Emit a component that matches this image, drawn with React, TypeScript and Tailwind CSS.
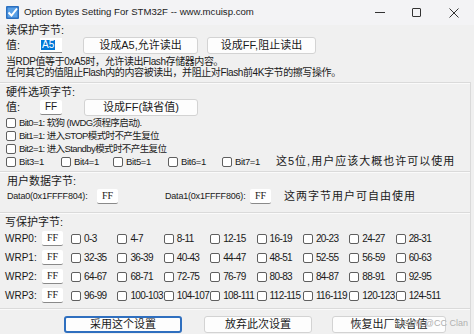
import React from "react";

const cjk = { fontFamily: '"Liberation Sans", "Noto Sans CJK SC", sans-serif' };
const mono = { fontFamily: '"Liberation Serif", serif' };

function Box() {
  return <span className="inline-block w-[10px] h-[10px] shrink-0 rounded-[2px] border border-[#5f5f5f] bg-white" />;
}

function Check({ label, className = "" }: { label: string; className?: string }) {
  return (
    <div className={"flex items-center gap-[3px] whitespace-nowrap " + className}>
      <Box />
      <span className="leading-none">{label}</span>
    </div>
  );
}

function Field({ value, w = "w-[21px]", serif = false }: { value: string; w?: string; serif?: boolean }) {
  return (
    <div
      className={`${w} h-[15px] shrink-0 bg-white border-b border-[#8a8a8a] rounded-[2px] flex items-center pl-[5px] text-[10px] leading-none`}
      style={serif ? mono : undefined}
    >
      {value}
    </div>
  );
}

function Btn({ label, w, focus = false }: { label: string; w: string; focus?: boolean }) {
  return (
    <div
      className={`${w} h-[17px] flex items-center justify-center rounded-[3px] bg-[#fdfdfd] text-[11px] leading-none ${
        focus ? "border-2 border-[#2f6fbf]" : "border border-[#d3d3d3]"
      }`}
    >
      {label}
    </div>
  );
}

function Section({ children, className = "" }: { children: React.ReactNode; className?: string }) {
  return (
    <div className={"border-t border-r border-[#dadada] shadow-[inset_0_1px_0_#fafafa] mr-[3px] " + className}>
      {children}
    </div>
  );
}

const wrp = [
  ["0-3", "4-7", "8-11", "12-15", "16-19", "20-23", "24-27", "28-31"],
  ["32-35", "36-39", "40-43", "44-47", "48-51", "52-55", "56-59", "60-63"],
  ["64-67", "68-71", "72-75", "76-79", "80-83", "84-87", "88-91", "92-95"],
  ["96-99", "100-103", "104-107", "108-111", "112-115", "116-119", "120-123", "124-511"],
];

export default function App() {
  return (
    <div className="w-[474px] h-[334px] overflow-hidden bg-[#f0f0f0] text-[11px] text-[#1a1a1a] relative" style={cjk}>
      {/* title bar */}
      <div className="h-[25px] bg-[#f3f3f5] flex items-center">
        <svg className="ml-[6px]" width="13" height="13" viewBox="0 0 13 13">
          <rect x="0" y="0" width="13" height="13" rx="1" fill="#2a6fc0" />
          <rect x="1.5" y="1.5" width="10" height="10" fill="#5aa0e6" />
          <path d="M2.5 6.5 L5.5 9.5 L11 2.5" stroke="#fff" strokeWidth="2" fill="none" />
        </svg>
        <span className="ml-[5px] text-[9.6px] text-[#222]">Option Bytes Setting For STM32F -- www.mcuisp.com</span>
        <div className="ml-auto flex items-center h-full">
          <div className="w-[36px] flex justify-center">
            <div className="w-[10px] h-px bg-[#333]" />
          </div>
          <div className="w-[36px] flex justify-center">
            <div className="w-[9px] h-[9px] border border-[#333] rounded-[1px]" />
          </div>
          <div className="w-[40px] flex justify-center">
            <svg width="10" height="10" viewBox="0 0 10 10">
              <path d="M0.5 0.5 L9.5 9.5 M9.5 0.5 L0.5 9.5" stroke="#333" strokeWidth="1" />
            </svg>
          </div>
        </div>
      </div>

      {/* read protect */}
      <div className="pl-[6px] h-[57px]">
        <div className="h-[11px] flex items-center">读保护字节:</div>
        <div className="h-[18px] flex items-center">
          <span className="w-[34px]">值:</span>
          <div className="w-[22px] h-[15px] bg-white border-b border-[#8a8a8a] flex items-center pl-[1px]">
            <span className="bg-[#0078d7] text-white text-[10px] leading-none px-[1px]">A5</span>
          </div>
          <div className="ml-[21px]"><Btn label="设成A5,允许读出" w="w-[115px]" /></div>
          <div className="ml-[9px]"><Btn label="设成FF,阻止读出" w="w-[109px]" /></div>
        </div>
        <div className="mt-[2px] leading-[11px] text-[10px] tracking-[-0.4px]">当RDP值等于0xA5时，允许读出Flash存储器内容。</div>
        <div className="leading-[11px] text-[10px] tracking-[-0.4px]">任何其它的值阻止Flash内的内容被读出，并阻止对Flash前4K字节的擦写操作。</div>
      </div>

      {/* hardware option */}
      <Section className="h-[89px] pl-[6px] pt-[4px]">
        <div className="h-[11px] flex items-center">硬件选项字节:</div>
        <div className="h-[18px] flex items-center">
          <span className="w-[34px]">值:</span>
          <Field value="FF" w="w-[22px]" />
          <div className="ml-[22px]"><Btn label="设成FF(缺省值)" w="w-[114px]" /></div>
        </div>
        <Check label="Bit0=1: 软狗 (IWDG须程序启动)." className="h-[13px] text-[9.5px] tracking-[-0.6px]" />
        <Check label="Bit1=1: 进入STOP模式时不产生复位" className="h-[13px] text-[9.5px] tracking-[-0.6px]" />
        <Check label="Bit2=1: 进入Standby模式时不产生复位" className="h-[13px] text-[9.5px] tracking-[-0.6px]" />
        <div className="h-[13px] flex items-center text-[9.5px] tracking-[-0.4px]">
          <Check label="Bit3=1" className="w-[55px]" />
          <Check label="Bit4=1" className="w-[52px]" />
          <Check label="Bit5=1" className="w-[55px]" />
          <Check label="Bit6=1" className="w-[54px]" />
          <Check label="Bit7=1" className="w-[54px]" />
          <span className="tracking-[1px] text-[11px]">这5位,用户应该大概也许可以使用</span>
        </div>
      </Section>

      {/* user data */}
      <Section className="h-[41px] pl-[7px] pt-[3px]">
        <div className="h-[12px] flex items-center">用户数据字节:</div>
        <div className="h-[19px] flex items-center text-[9px]">
          <span className="w-[90px] whitespace-nowrap tracking-[-0.2px]">Data0(0x1FFFF804):</span>
          <Field value="FF" serif />
          <span className="ml-[47px] w-[85px] whitespace-nowrap tracking-[-0.2px]">Data1(0x1FFFF806):</span>
          <Field value="FF" serif />
          <span className="ml-[13px] text-[11px] tracking-[1px]">这两字节用户可自由使用</span>
        </div>
      </Section>

      {/* write protect */}
      <Section className="h-[96px] pl-[5px] pt-[3px]">
        <div className="h-[13px] flex items-center">写保护字节:</div>
        {wrp.map((row, i) => (
          <div key={i} className="h-[19px] flex items-center text-[10px]">
            <span className="w-[37px]">WRP{i}:</span>
            <Field value="FF" w="w-[21px]" serif />
            <div className="ml-[8px] grid grid-cols-8 w-[371px] tracking-[-0.6px]">
              {row.map((l) => (
                <Check key={l} label={l} />
              ))}
            </div>
          </div>
        ))}
      </Section>

      {/* bottom buttons */}
      <Section className="h-[30px] pt-[7px]">
        <div className="flex">
          <div className="ml-[64px]"><Btn label="采用这个设置" w="w-[118px]" focus /></div>
          <div className="ml-[22px]"><Btn label="放弃此次设置" w="w-[108px]" /></div>
          <div className="ml-[20px]"><Btn label="恢复出厂缺省值" w="w-[114px]" /></div>
        </div>
      </Section>

      <span className="absolute right-[6px] bottom-[4px] text-[9px] text-[#b0b0b0]" style={{ fontFamily: '"Liberation Sans", sans-serif' }}>
        CSDN @CC Clan
      </span>
    </div>
  );
}
